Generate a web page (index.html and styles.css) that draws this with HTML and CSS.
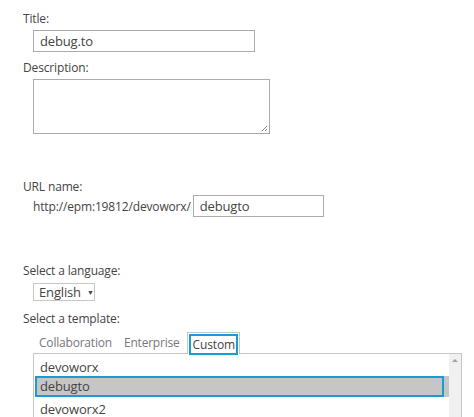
FILE: index.html
```html
<!DOCTYPE html>
<html>
<head>
<meta charset="utf-8">
<link rel="stylesheet" href="styles.css">
</head>
<body>
<div class="form">
  <div class="label l-title">Title:</div>
  <div class="indent"><div class="input title-input">debug.to</div></div>
  <div class="label l-desc">Description:</div>
  <div class="indent">
    <div class="textarea">
      <svg class="grip" width="8" height="8" viewBox="0 0 8 8"><path d="M7 2 L2 7 M7 5 L5 7" stroke="#8a8a8a" stroke-width="1" fill="none"/></svg>
    </div>
  </div>
  <div class="label l-url">URL name:</div>
  <div class="indent url-row">
    <span class="prefix">http://epm:19812/devoworx/</span>
    <div class="input url-input">debugto</div>
  </div>
  <div class="label l-lang">Select a language:</div>
  <div class="indent">
    <div class="select">English <span class="arrow">&#9660;</span></div>
  </div>
  <div class="label l-tmpl">Select a template:</div>
  <div class="indent">
    <div class="tabs">
      <span class="tab">Collaboration</span>
      <span class="tab">Enterprise</span>
      <span class="tab active"><span class="focus">Custom</span></span>
    </div>
    <div class="listbox">
      <div class="items">
        <div class="item">devoworx</div>
        <div class="item selected"><span class="sel-outline">debugto</span></div>
        <div class="item">devoworx2</div>
      </div>
      <div class="scrollbar"><span class="up"></span></div>
    </div>
  </div>
</div>
</body>
</html>
```
FILE: styles.css
```css
html, body {
  margin: 0;
  padding: 0;
  background: #ffffff;
  overflow: hidden;
}
.form {
  font-family: "Open Sans", "Noto Sans", sans-serif;
  font-size: 12px;
  letter-spacing: -0.15px;
  color: #444444;
  padding: 10px 0 0 23px;
  line-height: 17px;
}
.label {
  color: #444444;
}
.indent {
  padding-left: 10px;
}
.l-title { height: 20px; }
.input {
  box-sizing: border-box;
  border: 1px solid #ababab;
  height: 22px;
  line-height: 20px;
  padding-left: 6px;
  color: #444444;
  background: #fff;
  font-size: 13px;
}
.title-input { width: 222px; }
.l-desc { margin-top: 7px; height: 20px; }
.textarea {
  box-sizing: border-box;
  position: relative;
  width: 237px;
  height: 55px;
  border: 1px solid #ababab;
}
.grip {
  position: absolute;
  right: 1px;
  bottom: 1px;
}
.l-url { margin-top: 44px; height: 17px; }
.url-row {
  display: flex;
  align-items: center;
}
.prefix { margin-right: 2px; }
.url-input { width: 131px; }
.l-lang { margin-top: 45px; height: 21px; }
.select {
  box-sizing: border-box;
  display: inline-flex;
  align-items: center;
  width: 62px;
  height: 18px;
  border: 1px solid #c6c6c6;
  padding-left: 5px;
  color: #444;
  font-size: 13px;
}
.arrow {
  font-size: 7px;
  margin-left: 6px;
  color: #444;
}
.l-tmpl { margin-top: 9px; height: 19px; }
.tabs {
  display: flex;
  align-items: flex-end;
  height: 22px;
  margin-top: 2px;
  padding-left: 6px;
}
.tab {
  color: #777777;
  margin-right: 12px;
  line-height: 20px;
  letter-spacing: -0.2px;
}
.tab.active {
  box-sizing: border-box;
  border: 1px solid #c6c6c6;
  border-bottom: none;
  height: 22px;
  padding: 1px 1px 0 1px;
  margin-left: -5px;
  background: #fff;
  position: relative;
  z-index: 1;
  margin-bottom: -1px;
  letter-spacing: -0.15px;
}
.focus {
  display: block;
  box-sizing: border-box;
  border: 2px solid #1c9ad6;
  height: 21px;
  line-height: 17px;
  padding: 0 1px 0 2px;
  color: #444;
}
.listbox {
  box-sizing: border-box;
  width: 429px;
  height: 70px;
  border: 1px solid #c6c6c6;
  display: flex;
  font-size: 13px;
}
.items {
  flex: 1;
  padding-top: 4px;
  padding-left: 1px;
}
.item {
  height: 18px;
  line-height: 18px;
  padding-left: 5px;
  color: #444;
}
.item.selected {
  background: #c6c6c6;
  padding-left: 0;
  height: 21px;
  margin: 0 0 3px 0;
  margin-right: -5px;
}
.sel-outline {
  display: block;
  box-sizing: border-box;
  border: 2px solid #1c9ad6;
  height: 21px;
  line-height: 17px;
  padding-left: 3px;
  margin-right: 5px;
}
.scrollbar {
  width: 12px;
  margin-left: 5px;
  background: #f0f0f0;
  position: relative;
}
.up {
  position: absolute;
  left: 3px;
  top: 5px;
  width: 0;
  height: 0;
  border-left: 3px solid transparent;
  border-right: 3px solid transparent;
  border-bottom: 3px solid #a0a0a0;
}
```
